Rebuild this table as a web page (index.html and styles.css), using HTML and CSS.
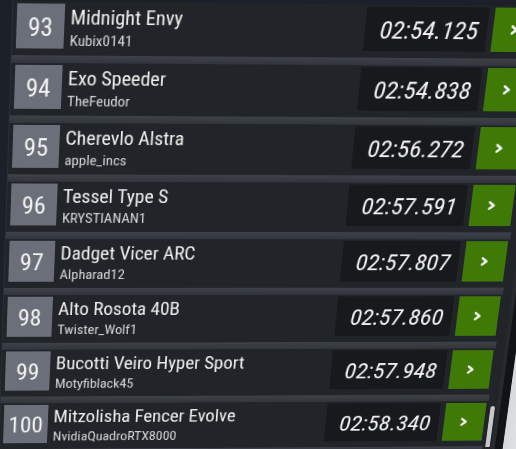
FILE: index.html
```html
<!DOCTYPE html>
<html lang="en">
<head>
<meta charset="utf-8">
<title>Leaderboard</title>
<link rel="stylesheet" href="styles.css">
</head>
<body>
<div class="panel">
  <div class="frame">
    <div class="list">
      <div class="row">
        <div class="rank">93</div>
        <div class="info"><div class="car">Midnight Envy</div><div class="player">Kubix0141</div></div>
        <div class="time">02:54.125</div>
        <div class="go"><svg viewBox="0 0 10 12" width="10" height="12"><path d="M3 2.5 L7.3 6 L3 9.5" /></svg></div>
      </div>
      <div class="row">
        <div class="rank">94</div>
        <div class="info"><div class="car">Exo Speeder</div><div class="player">TheFeudor</div></div>
        <div class="time">02:54.838</div>
        <div class="go"><svg viewBox="0 0 10 12" width="10" height="12"><path d="M3 2.5 L7.3 6 L3 9.5" /></svg></div>
      </div>
      <div class="row">
        <div class="rank">95</div>
        <div class="info"><div class="car">Cherevlo Alstra</div><div class="player">apple_incs</div></div>
        <div class="time">02:56.272</div>
        <div class="go"><svg viewBox="0 0 10 12" width="10" height="12"><path d="M3 2.5 L7.3 6 L3 9.5" /></svg></div>
      </div>
      <div class="row">
        <div class="rank">96</div>
        <div class="info"><div class="car">Tessel Type S</div><div class="player">KRYSTIANAN1</div></div>
        <div class="time">02:57.591</div>
        <div class="go"><svg viewBox="0 0 10 12" width="10" height="12"><path d="M3 2.5 L7.3 6 L3 9.5" /></svg></div>
      </div>
      <div class="row">
        <div class="rank">97</div>
        <div class="info"><div class="car">Dadget Vicer ARC</div><div class="player">Alpharad12</div></div>
        <div class="time">02:57.807</div>
        <div class="go"><svg viewBox="0 0 10 12" width="10" height="12"><path d="M3 2.5 L7.3 6 L3 9.5" /></svg></div>
      </div>
      <div class="row">
        <div class="rank">98</div>
        <div class="info"><div class="car">Alto Rosota 40B</div><div class="player">Twister_Wolf1</div></div>
        <div class="time">02:57.860</div>
        <div class="go"><svg viewBox="0 0 10 12" width="10" height="12"><path d="M3 2.5 L7.3 6 L3 9.5" /></svg></div>
      </div>
      <div class="row">
        <div class="rank">99</div>
        <div class="info"><div class="car">Bucotti Veiro Hyper Sport</div><div class="player">Motyfiblack45</div></div>
        <div class="time">02:57.948</div>
        <div class="go"><svg viewBox="0 0 10 12" width="10" height="12"><path d="M3 2.5 L7.3 6 L3 9.5" /></svg></div>
      </div>
      <div class="row">
        <div class="rank">100</div>
        <div class="info"><div class="car">Mitzolisha Fencer Evolve</div><div class="player">NvidiaQuadroRTX8000</div></div>
        <div class="time">02:58.340</div>
        <div class="go"><svg viewBox="0 0 10 12" width="10" height="12"><path d="M3 2.5 L7.3 6 L3 9.5" /></svg></div>
      </div>
    </div>
    <div class="scroll"><div class="thumb"></div></div>
    <div class="edge"></div>
  </div>
</div>
</body>
</html>
```
FILE: styles.css
```css
html, body {
  margin: 0;
  width: 516px;
  height: 449px;
  overflow: hidden;
  background: #dcdde0;
}

.panel {
  width: 600px;
  height: 600px;
  display: flex;
  background: linear-gradient(to right, #1c2028 0, #1c2028 576px, #d6d8db 576px, #e6e7ea 600px);
  transform-origin: 0 0 0;
  transform: matrix3d(1.00123, 0.009002, 0, 0.00003354, -0.02866, 0.98825, 0, 0.00019102, 0, 0, 1, 0, -0.6611, -68.034, 0, 0.9855758);
  font-family: "Roboto Condensed", "Roboto", sans-serif;
  font-stretch: condensed;
  color: #f2f2f2;
}

.frame {
  width: 576px;
  height: 100%;
  display: flex;
  box-sizing: border-box;
  padding-left: 15px;
  background: #1c2028;
}

.list {
  width: 537px;
  padding-top: 70px;
  border-left: 1px solid #2b3038;
  display: flex;
  flex-direction: column;
}

.row {
  height: 63px;
  box-sizing: border-box;
  padding: 2px 2px 0 4px;
  display: flex;
  align-items: flex-start;
  background: linear-gradient(#212428 0, #212428 55px, #3d4148 55px, #32363c 63px);
}

.rank {
  width: 48px;
  height: 46px;
  flex: none;
  box-sizing: border-box;
  padding-top: 4px;
  background: #6a6f79;
  display: flex;
  align-items: center;
  justify-content: center;
  font-size: 25.3px;
  line-height: 1;
  color: #f4f4f4;
}

.info {
  flex: 1;
  min-width: 0;
  margin-left: 6px;
  white-space: nowrap;
}

.car {
  font-size: 20.5px;
  line-height: 24px;
  margin-top: 2px;
  color: #f0f0f0;
}

.player {
  font-size: 15.3px;
  line-height: 18px;
  margin-top: 2.6px;
  color: #d6d7d9;
}

.time {
  width: 126px;
  height: 46px;
  flex: none;
  box-sizing: border-box;
  padding: 3.2px 9px 0 0;
  background: #17191d;
  display: flex;
  align-items: center;
  justify-content: flex-end;
  font-style: italic;
  font-size: 26.5px;
  line-height: 1;
  color: #f2f2f2;
}

.go {
  width: 45px;
  height: 46px;
  flex: none;
  margin-left: 6px;
  background: #3f7a07;
  display: flex;
  align-items: center;
  justify-content: center;
  padding-right: 2px;
  box-sizing: border-box;
}

.go path {
  fill: none;
  stroke: #f4f4f4;
  stroke-width: 2.8;
  stroke-linecap: round;
  stroke-linejoin: round;
}

.scroll {
  width: 10px;
  box-sizing: border-box;
  padding: 517px 2px 0 3px;
  background: #212428;
}

.thumb {
  width: 5px;
  height: 50px;
  border-radius: 3px 3px 1px 1px;
  background: #c6c8cb;
}

.edge {
  width: 13px;
  background: linear-gradient(to right, #26292e 0, #26292e 4px, #111316 4px);
}
```
